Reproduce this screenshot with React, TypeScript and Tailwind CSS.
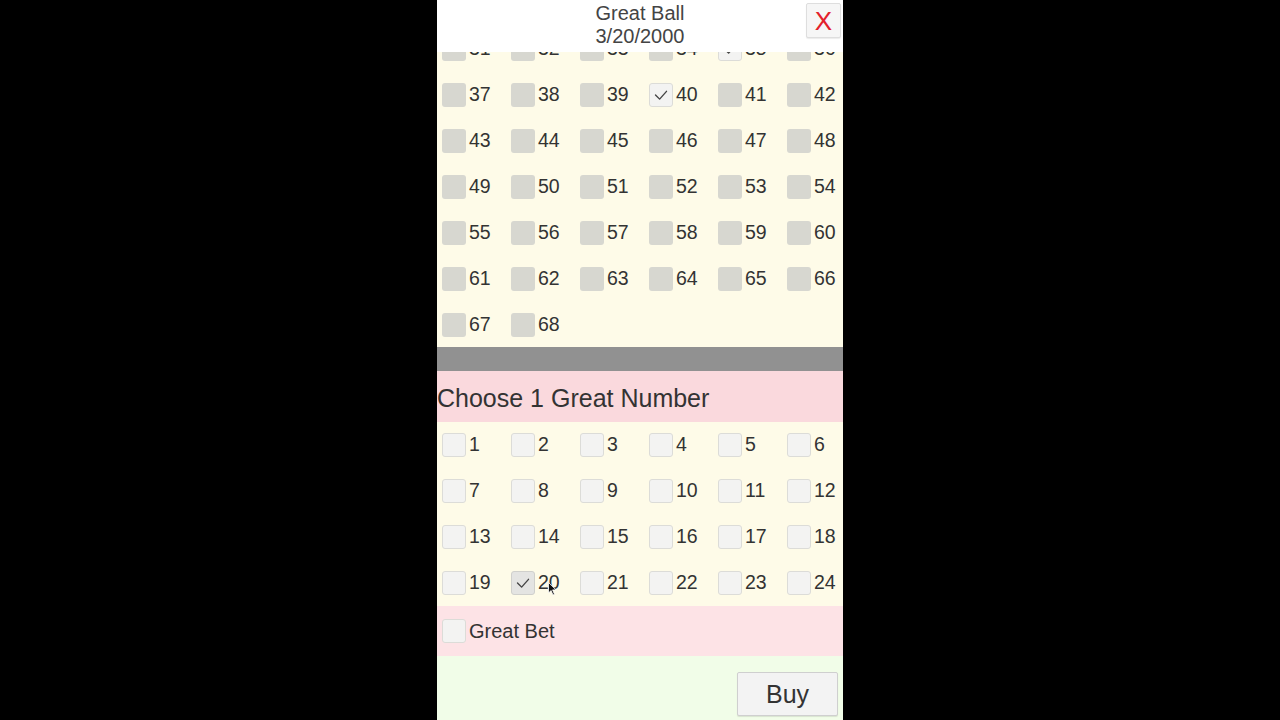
import { useState } from 'react';

const mainNumbers = Array.from({ length: 38 }, (_, i) => i + 31);
const greatNumbers = Array.from({ length: 24 }, (_, i) => i + 1);

function Check({ className }: { className?: string }) {
  return (
    <svg viewBox="0 0 24 24" className={className} fill="none" stroke="#444" strokeWidth={1.5}>
      <polyline points="6,12 10.5,16.5 18,8" strokeLinecap="round" strokeLinejoin="round" />
    </svg>
  );
}

interface BoxProps {
  checked: boolean;
  variant: 'main' | 'great';
  onClick: () => void;
}

function Box({ checked, variant, onClick }: BoxProps) {
  const base = 'w-6 h-6 shrink-0 rounded-[3px] flex items-center justify-center';
  let look = 'bg-[#f3f3f2] border border-[#dcdcd8]';
  if (variant === 'main' && !checked) look = 'bg-[#d7d7d0]';
  if (variant === 'great' && checked) look = 'bg-[#e4e4e2] border border-[#d0d0cc]';
  return (
    <button type="button" onClick={onClick} className={`${base} ${look}`}>
      {checked && <Check className="w-[22px] h-[22px]" />}
    </button>
  );
}

function NumberGrid({
  numbers,
  picked,
  variant,
  toggle,
}: {
  numbers: number[];
  picked: number[];
  variant: 'main' | 'great';
  toggle: (n: number) => void;
}) {
  return (
    <div className="grid grid-cols-[repeat(5,69px)_1fr] pl-[5px]">
      {numbers.map((n) => (
        <div key={n} className="h-[46px] flex items-center gap-[3px]">
          <Box checked={picked.includes(n)} variant={variant} onClick={() => toggle(n)} />
          <span className="text-[19.5px] text-[#333]">{n}</span>
        </div>
      ))}
    </div>
  );
}

export default function App() {
  const [main, setMain] = useState<number[]>([35, 40]);
  const [great, setGreat] = useState<number[]>([20]);
  const [greatBet, setGreatBet] = useState(false);

  const toggleMain = (n: number) =>
    setMain((p) => (p.includes(n) ? p.filter((x) => x !== n) : [...p, n]));
  const toggleGreat = (n: number) => setGreat((p) => (p.includes(n) ? [] : [n]));

  return (
    <div className="min-h-screen bg-black flex justify-center" style={{ fontFamily: '"Liberation Sans", Arial, sans-serif' }}>
      <div className="w-[406px] h-[720px] flex flex-col relative">
        {/* title bar */}
        <div className="h-[52px] shrink-0 bg-white relative flex flex-col items-center justify-center leading-[23px] text-[20px] text-[#444] pb-[3px]">
          <span>Great Ball</span>
          <span>3/20/2000</span>
          <button
            type="button"
            className="absolute right-[2px] top-[3px] w-[35px] h-[35px] bg-[#f6f6f6] border border-[#dedede] rounded-[2px] text-[#e3212b] text-[26px] leading-none flex items-center justify-center shadow-[0_1px_1px_rgba(0,0,0,0.08)]"
          >
            X
          </button>
        </div>

        {/* main numbers, scrolled */}
        <div className="h-[295px] shrink-0 bg-[#fefbe8] overflow-hidden">
          <div className="-mt-[26px]">
            <NumberGrid numbers={mainNumbers} picked={main} variant="main" toggle={toggleMain} />
          </div>
        </div>

        <div className="h-[24px] shrink-0 bg-[#919191]" />

        <div className="h-[51px] shrink-0 bg-[#fad9dd] flex items-center pt-[5px] text-[25px] text-[#333]">
          Choose 1 Great Number
        </div>

        <div className="h-[184px] shrink-0 bg-[#fefbe8]">
          <NumberGrid numbers={greatNumbers} picked={great} variant="great" toggle={toggleGreat} />
        </div>

        <div className="h-[50px] shrink-0 bg-[#fde3e6] flex items-center gap-[3px] pl-[5px]">
          <Box checked={greatBet} variant="great" onClick={() => setGreatBet((v) => !v)} />
          <span className="text-[20px] text-[#333]">Great Bet</span>
        </div>

        <div className="flex-1 bg-[#f1fde8] flex items-end justify-end pr-[5px] pb-[4px]">
          <button
            type="button"
            className="w-[101px] h-[44px] bg-[#f3f3f3] border border-[#cfcfcf] rounded-[2px] text-[25px] text-[#333] pt-[1px] shadow-[0_1px_1px_rgba(0,0,0,0.1)]"
          >
            Buy
          </button>
        </div>

        {/* pointer */}
        <svg className="absolute left-[111px] top-[582px] w-[9px] h-[14px]" viewBox="0 0 9 14">
          <path d="M0.5 0.5 L0.5 11 L3 8.5 L5 13 L6.5 12.3 L4.6 7.9 L8 7.9 Z" fill="#111" stroke="#fff" strokeWidth="0.8" />
        </svg>
      </div>
    </div>
  );
}
